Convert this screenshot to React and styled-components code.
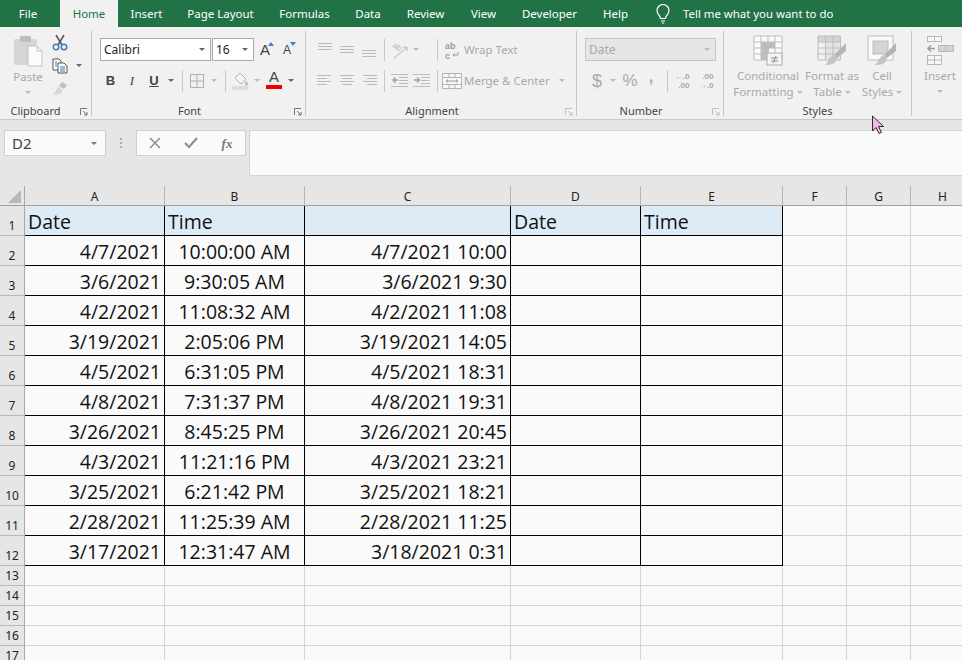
import React from "react";
import styled, { createGlobalStyle } from "styled-components";

const GlobalStyle = createGlobalStyle`
  html, body { margin: 0; padding: 0; background: #fafafa; overflow: hidden; }
  * { box-sizing: border-box; }
`;

const UI_FONT = `"Noto Sans", "Open Sans", sans-serif`;
const DIM = "#a9a9a9";
const DARK = "#444";

const tabs = [
  ["File", 56], ["Home", 58], ["Insert", 57], ["Page Layout", 91], ["Formulas", 77],
  ["Data", 50], ["Review", 65], ["View", 51], ["Developer", 81], ["Help", 51],
];

const columns = [
  ["A", 140], ["B", 140], ["C", 206], ["D", 130], ["E", 142], ["F", 64], ["G", 64], ["H", 64],
];

const rows = [
  ["4/7/2021", "10:00:00 AM", "4/7/2021 10:00"],
  ["3/6/2021", "9:30:05 AM", "3/6/2021 9:30"],
  ["4/2/2021", "11:08:32 AM", "4/2/2021 11:08"],
  ["3/19/2021", "2:05:06 PM", "3/19/2021 14:05"],
  ["4/5/2021", "6:31:05 PM", "4/5/2021 18:31"],
  ["4/8/2021", "7:31:37 PM", "4/8/2021 19:31"],
  ["3/26/2021", "8:45:25 PM", "3/26/2021 20:45"],
  ["4/3/2021", "11:21:16 PM", "4/3/2021 23:21"],
  ["3/25/2021", "6:21:42 PM", "3/25/2021 18:21"],
  ["2/28/2021", "11:25:39 AM", "2/28/2021 11:25"],
  ["3/17/2021", "12:31:47 AM", "3/18/2021 0:31"],
];

const Page = styled.div`
  position: relative;
  width: 962px;
  height: 660px;
  overflow: hidden;
  font-family: ${UI_FONT};
  background: #fafafa;
`;

const TabBar = styled.div`
  display: flex;
  height: 27px;
  background: #217346;
  color: #fff;
  font-size: 11.5px;
`;

const Tab = styled.div`
  width: ${(p) => p.$w}px;
  margin-left: ${(p) => (p.$active ? 4 : 0)}px;
  display: flex;
  align-items: center;
  justify-content: center;
  background: ${(p) => (p.$active ? "#f1f1f1" : "transparent")};
  color: ${(p) => (p.$active ? "#217346" : "#fff")};
`;

const TellMe = styled.div`
  display: flex;
  align-items: center;
  gap: 12px;
  margin-left: 14px;
  font-size: 11.4px;
`;

const Ribbon = styled.div`
  display: flex;
  height: 93px;
  padding-top: 4px;
  background: #f1f1f1;
  border-bottom: 1px solid #c9c9c9;
  overflow: hidden;
`;

const Group = styled.div`
  position: relative;
  flex: none;
  width: ${(p) => p.$w}px;
  height: 85px;
  display: flex;
  flex-direction: column;
  border-right: 1px solid #c6c6c6;
`;

const GroupBody = styled.div`
  flex: 1;
  display: flex;
  padding-left: ${(p) => p.$pad ?? 8}px;
  min-height: 0;
`;

const GroupLabel = styled.div`
  height: 14px;
  line-height: 18px;
  padding-right: ${(p) => p.$inset || 0}px;
  text-align: center;
  font-size: 11px;
  color: #444;
`;

const Launcher = styled.svg`
  position: absolute;
  right: 3px;
  bottom: 0;
`;

const Stack = styled.div`
  display: flex;
  flex-direction: column;
  gap: 8px;
  padding-top: 7px;
`;

const Line = styled.div`
  display: flex;
  align-items: center;
  height: 23px;
`;

const Slot = styled.span`
  flex: none;
  width: ${(p) => p.$w}px;
  height: 23px;
  display: flex;
  align-items: center;
  justify-content: center;
  position: relative;
`;

const Divider = styled.span`
  flex: none;
  width: ${(p) => p.$w || 10}px;
  display: flex;
  justify-content: center;
  &::before {
    content: "";
    width: 1px;
    height: 22px;
    background: #c6c6c6;
  }
`;

const Caret = styled.span`
  flex: none;
  width: 0;
  height: 0;
  border-left: 3px solid transparent;
  border-right: 3px solid transparent;
  border-top: 3px solid ${(p) => p.$color || "#666"};
`;

const ComboBox = styled.div`
  flex: none;
  width: ${(p) => p.$w}px;
  height: 23px;
  margin-right: ${(p) => p.$gap || 0}px;
  padding: 0 5px 0 3px;
  display: flex;
  align-items: center;
  justify-content: space-between;
  background: ${(p) => (p.$disabled ? "#e6e6e6" : "#fff")};
  border: 1px solid ${(p) => (p.$disabled ? "#c6c6c6" : "#ababab")};
  color: ${(p) => (p.$disabled ? DIM : "#222")};
  font-size: 12px;
`;

const Glyph = styled.span`
  font-family: ${(p) => p.$serif ? `"Liberation Serif", serif` : `"Liberation Sans", sans-serif`};
  font-size: ${(p) => p.$size || 13}px;
  font-weight: ${(p) => (p.$bold ? 700 : 400)};
  font-style: ${(p) => (p.$italic ? "italic" : "normal")};
  text-decoration: ${(p) => (p.$under ? "underline" : "none")};
  color: ${(p) => p.$color || DARK};
  line-height: 1;
  margin-bottom: ${(p) => p.$lift || 0}px;
`;

const ColorBar = styled.span`
  position: absolute;
  left: 4px;
  right: 4px;
  bottom: 3px;
  height: 4px;
  background: #f00000;
`;

const DimText = styled.span`
  flex: none;
  margin-left: ${(p) => p.$gap || 2}px;
  margin-right: 9px;
  font-size: 11.5px;
  color: ${DIM};
  white-space: nowrap;
`;

const Tiny = styled.span`
  display: flex;
  flex-direction: column;
  align-items: flex-end;
  font-family: "Liberation Sans", sans-serif;
  font-size: 8px;
  line-height: 9px;
  color: ${DIM};
  font-weight: 700;
`;

const BigButton = styled.div`
  flex: none;
  width: ${(p) => p.$w}px;
  height: 71px;
  padding-top: 4px;
  display: flex;
  flex-direction: column;
  align-items: center;
  font-size: 11.5px;
  line-height: 16px;
  color: ${DIM};
  white-space: nowrap;
  svg { flex: none; margin-bottom: 2px; }
`;

const ButtonLine = styled.span`
  display: flex;
  align-items: center;
  gap: 3px;
`;

const DropCaret = styled(Caret)`
  margin-top: 6px;
`;

const SmallCol = styled.div`
  flex: none;
  display: flex;
  flex-direction: column;
  width: 40px;
`;

const FormulaBar = styled.div`
  height: 66px;
  padding: 10px 0 0 4px;
  display: flex;
  align-items: flex-start;
  background: #e6e6e6;
`;

const NameBox = styled.div`
  width: 102px;
  height: 26px;
  padding: 0 8px 0 7px;
  display: flex;
  align-items: center;
  justify-content: space-between;
  background: #fafafa;
  border: 1px solid #d0d0d0;
  font-size: 15px;
  color: #444;
`;

const Grip = styled.div`
  width: 30px;
  height: 26px;
  display: flex;
  align-items: center;
  justify-content: center;
  &::before {
    content: "";
    width: 2px;
    height: 10px;
    background: repeating-linear-gradient(#b0b0b0 0 2px, transparent 2px 4px);
  }
`;

const FxBox = styled.div`
  width: 110px;
  height: 26px;
  display: flex;
  align-items: center;
  background: #fafafa;
  border: 1px solid #d0d0d0;
  margin-right: 3px;
`;

const FormulaInput = styled.div`
  flex: 1;
  height: 46px;
  background: #fafafa;
  border: 1px solid #d4d4d4;
  border-right: none;
`;

const Sheet = styled.div`
  display: grid;
  grid-template-columns: 25px ${columns.map((c) => c[1] + "px").join(" ")};
  grid-template-rows: 20px 30px repeat(11, 30px) repeat(5, 20px);
  font-family: "Open Sans", "Noto Sans", sans-serif;
  font-size: 19.5px;
  color: #111;
`;

const Corner = styled.div`
  display: flex;
  align-items: flex-end;
  justify-content: flex-end;
  padding: 0 3px 2px 0;
  background: #e6e6e6;
  border-right: 1px solid #a8a8a8;
  border-bottom: 1px solid #a0a0a0;
`;

const ColHead = styled.div`
  display: flex;
  align-items: center;
  justify-content: center;
  padding-top: 2px;
  background: #e6e6e6;
  border-right: 1px solid #b4b4b4;
  border-bottom: 1px solid #a0a0a0;
  font-family: ${UI_FONT};
  font-size: 12px;
  color: #222;
`;

const RowHead = styled.div`
  display: flex;
  align-items: flex-end;
  justify-content: center;
  padding-bottom: 1px;
  background: #e6e6e6;
  border-right: 1px solid #a8a8a8;
  border-bottom: 1px solid #b8b8b8;
  font-family: ${UI_FONT};
  font-size: 12px;
  line-height: 16px;
  color: #222;
`;

const Cell = styled.div`
  display: flex;
  align-items: flex-end;
  justify-content: ${(p) => p.$align || "flex-start"};
  padding: 0 3px 1px 3px;
  line-height: 25px;
  white-space: nowrap;
  overflow: hidden;
  background: ${(p) => (p.$head ? "#ddebf7" : "transparent")};
  border-right: 1px solid ${(p) => (p.$edged ? "#000" : "#d4d4d4")};
  border-bottom: 1px solid ${(p) => (p.$edged ? "#000" : "#d4d4d4")};
`;

const Pointer = styled.svg`
  position: absolute;
  left: 871px;
  top: 115px;
`;

function Bulb() {
  return (
    <svg width="16" height="20" viewBox="0 0 16 20" fill="none" stroke="#fff" strokeWidth="1.2">
      <path d="M5.5 14.5c0-3-3.5-4-3.5-8a6 6 0 0 1 12 0c0 4-3.5 5-3.5 8z" />
      <path d="M6 17h4M6.8 19h2.4" />
    </svg>
  );
}

function PasteIcon() {
  return (
    <svg width="30" height="32" viewBox="0 0 30 32">
      <rect x="1" y="4" width="23" height="26" rx="2" fill="#d6d6d6" />
      <rect x="7" y="1" width="11" height="6" rx="1" fill="#bdbdbd" />
      <path d="M15 11h9l5 5v15H15z" fill="#fbfbfb" stroke="#c2c2c2" />
      <path d="M24 11v5h5" fill="none" stroke="#c2c2c2" />
    </svg>
  );
}

function Scissors() {
  return (
    <svg width="16" height="17" viewBox="0 0 16 17" fill="none">
      <path d="M4 1l6 10M12 1L6 11" stroke="#555" strokeWidth="1.5" />
      <circle cx="4" cy="13" r="2.8" stroke="#3f77b8" strokeWidth="1.4" />
      <circle cx="12" cy="13" r="2.8" stroke="#3f77b8" strokeWidth="1.4" />
    </svg>
  );
}

function CopyIcon() {
  return (
    <svg width="16" height="16" viewBox="0 0 16 16" fill="#fff" stroke="#555">
      <path d="M1 1h6l2 2v9H1z" />
      <path d="M6 5h6l3 3v7H6z" />
      <path d="M8 9h5M8 11h5M8 13h5M3 4h2M3 6h2M3 8h2" fill="none" stroke="#3f77b8" />
    </svg>
  );
}

function BrushIcon() {
  return (
    <svg width="16" height="15" viewBox="0 0 16 15">
      <path d="M10 1l5 3-3 4-5-3z" fill="#c0c0c0" />
      <path d="M6 6l5 3c-1 3-5 5-10 5 2-2 3-5 5-8z" fill="#d8d8d8" />
    </svg>
  );
}

const TipSvg = styled.svg`
  position: absolute;
  top: 4px;
  right: 2px;
`;

function GrowTip({ down }) {
  return (
    <TipSvg width="6" height="4" viewBox="0 0 6 4">
      <path d={down ? "M0 0h6L3 4z" : "M0 4h6L3 0z"} fill="#4a7db5" />
    </TipSvg>
  );
}

function BordersIcon() {
  return (
    <svg width="14" height="14" viewBox="0 0 14 14" fill="none" stroke="#b0b0b0">
      <rect x="0.5" y="0.5" width="13" height="13" />
      <path d="M7 0v14M0 7h14" />
    </svg>
  );
}

function FillIcon() {
  return (
    <svg width="18" height="18" viewBox="0 0 18 18">
      <path d="M8 1l6 6-5 5-6-6z" fill="#f5f5f5" stroke="#b0b0b0" />
      <path d="M14 8c1 2 2 3 2 4a1.5 1.5 0 0 1-3 0c0-1 .5-2 1-4z" fill="#bcbcbc" />
      <rect x="0" y="14" width="16" height="4" fill="#dcdcdc" />
    </svg>
  );
}

function AlignLines({ widths, offset = 0, gap = 3, top = 0 }) {
  return (
    <svg width="16" height="16" viewBox="0 0 16 16" stroke="#bcbcbc" strokeWidth="1">
      {widths.map((w, i) => {
        const x = offset === 1 ? (16 - w) / 2 : offset === 2 ? 16 - w : 0;
        return <path key={i} d={`M${x} ${top + i * gap + 0.5}h${w}`} />;
      })}
    </svg>
  );
}

function OrientIcon() {
  return (
    <svg width="18" height="18" viewBox="0 0 18 18">
      <text x="1" y="8" fontSize="8" fill="#b4b4b4" fontFamily="Liberation Sans" transform="rotate(35 5 7)">ab</text>
      <path d="M3 17L15 7M12 6h4v4" fill="none" stroke="#b4b4b4" />
    </svg>
  );
}

function WrapIcon() {
  return (
    <svg width="18" height="18" viewBox="0 0 18 18">
      <text x="2" y="8" fontSize="9" fontWeight="700" fill="#9c9c9c" fontFamily="Liberation Sans">ab</text>
      <text x="2" y="17.5" fontSize="9" fontWeight="700" fill="#9c9c9c" fontFamily="Liberation Sans">c</text>
      <path d="M15 11v3h-5M11.5 12.5L10 14l1.5 1.5" fill="none" stroke="#9c9c9c" />
    </svg>
  );
}

function IndentIcon({ flip }) {
  return (
    <svg width="17" height="14" viewBox="0 0 17 14" stroke="#bcbcbc" fill="none">
      <path d="M0 .5h17M8 3.5h9M8 6.5h9M8 9.5h9M0 12.5h17" />
      <path d={flip ? "M1 6h5M4 3.5L6.5 6 4 8.5" : "M7 6H2M4.5 3.5L2 6l2.5 2.5"} stroke="#a0a0a0" strokeWidth="1.4" />
    </svg>
  );
}

function MergeIcon() {
  return (
    <svg width="20" height="16" viewBox="0 0 20 16" fill="#f7f7f7" stroke="#b4b4b4">
      <rect x="0.5" y="0.5" width="19" height="15" />
      <path d="M0 4.5h20M0 11.5h20M7 0v4M13 0v4M7 12v4M13 12v4" fill="none" />
      <path d="M4 8h12M4 8l2-1.5M4 8l2 1.5M16 8l-2-1.5M16 8l-2 1.5" fill="none" stroke="#9c9c9c" />
    </svg>
  );
}

function GridBase({ x = 1, y = 1, cols = 4, rowsN = 5, cw = 7, ch = 6 }) {
  const lines = [];
  for (let i = 0; i <= cols; i++) lines.push(`M${x + i * cw} ${y}v${rowsN * ch}`);
  for (let i = 0; i <= rowsN; i++) lines.push(`M${x} ${y + i * ch}h${cols * cw}`);
  return <path d={lines.join("")} stroke="#bdbdbd" fill="none" />;
}

function CondIcon() {
  return (
    <svg width="30" height="31" viewBox="0 0 30 31">
      <rect x="1" y="1" width="28" height="24" fill="#fafafa" />
      <rect x="8" y="7" width="8" height="18" fill="#bdbdbd" />
      <rect x="8" y="7" width="14" height="6" fill="#bdbdbd" />
      <GridBase cols={4} rowsN={4} cw={7} ch={6} />
      <rect x="14" y="18" width="15" height="12" fill="#f4f4f4" stroke="#b0b0b0" />
      <path d="M18 23h7M18 26h7M20 28l3-7" stroke="#8e8e8e" fill="none" />
    </svg>
  );
}

function TableIcon() {
  return (
    <svg width="30" height="31" viewBox="0 0 30 31">
      <rect x="1" y="1" width="22" height="6" fill="#d4d4d4" />
      <rect x="8" y="7" width="15" height="18" fill="#e3e3e3" />
      <GridBase cols={3} rowsN={4} cw={7.5} ch={6} />
      <path d="M29 8v8l-9 7-3-3z" fill="#b4b4b4" />
      <path d="M16 20c3 0 5 3 3 6-1 3-6 4-11 4 3-2 4-8 8-10z" fill="#c4c4c4" />
    </svg>
  );
}

function CellStyleIcon() {
  return (
    <svg width="30" height="31" viewBox="0 0 30 31">
      <rect x="1" y="1" width="25" height="24" fill="#fafafa" stroke="#bdbdbd" />
      <rect x="6" y="6" width="15" height="13" fill="#d4d4d4" stroke="#bdbdbd" />
      <path d="M29 8v8l-9 7-3-3z" fill="#b4b4b4" />
      <path d="M16 20c3 0 5 3 3 6-1 3-6 4-11 4 3-2 4-8 8-10z" fill="#c4c4c4" />
    </svg>
  );
}

function InsertIcon() {
  return (
    <svg width="28" height="31" viewBox="0 0 28 31" fill="#f7f7f7" stroke="#b8b8b8">
      <rect x="1.5" y="1.5" width="14" height="5" />
      <path d="M8.5 1.5v5" />
      <rect x="12.5" y="10.5" width="15" height="6" fill="#d4d4d4" />
      <path d="M20 10.5v6" />
      <path d="M9 13.5H2M5 10.5l-3 3 3 3" fill="none" stroke="#9a9a9a" strokeWidth="1.6" />
      <rect x="1.5" y="20.5" width="14" height="9" />
      <path d="M8.5 20.5v9M1.5 25h14" />
    </svg>
  );
}

function LauncherIcon({ dim }) {
  return (
    <Launcher width="8" height="8" viewBox="0 0 8 8" fill="none" stroke={dim ? "#c0c0c0" : "#777"}>
      <path d="M0.5 7V0.5H7M3 3l4 4M7 4v3H4" />
    </Launcher>
  );
}

function Ribbonbar() {
  return (
    <Ribbon>
      <Group $w={92}>
        <GroupBody $pad={12}>
          <BigButton $w={32}>
            <PasteIcon />
            <span>Paste</span>
            <DropCaret $color="#bbb" />
          </BigButton>
          <SmallCol>
            <Slot $w={32}><Scissors /></Slot>
            <Line>
              <Slot $w={32}><CopyIcon /></Slot>
              <Caret />
            </Line>
            <Slot $w={32}><BrushIcon /></Slot>
          </SmallCol>
        </GroupBody>
        <GroupLabel $inset={20}>Clipboard</GroupLabel>
        <LauncherIcon />
      </Group>

      <Group $w={214}>
        <GroupBody>
          <Stack>
            <Line>
              <ComboBox $w={111} $gap={1}>Calibri<Caret /></ComboBox>
              <ComboBox $w={42}>16<Caret /></ComboBox>
              <Slot $w={22}><Glyph $size={15}>A</Glyph><GrowTip /></Slot>
              <Slot $w={22}><Glyph $size={12}>A</Glyph><GrowTip down /></Slot>
            </Line>
            <Line>
              <Slot $w={21}><Glyph $bold>B</Glyph></Slot>
              <Slot $w={22}><Glyph $italic $serif>I</Glyph></Slot>
              <Slot $w={22}><Glyph $bold $under>U</Glyph></Slot>
              <Slot $w={12}><Caret /></Slot>
              <Divider />
              <Slot $w={20}><BordersIcon /></Slot>
              <Slot $w={13}><Caret $color="#bbb" /></Slot>
              <Divider />
              <Slot $w={22}><FillIcon /></Slot>
              <Slot $w={10}><Caret $color="#bbb" /></Slot>
              <Slot $w={24}><Glyph $size={15} $lift={8}>A</Glyph><ColorBar /></Slot>
              <Slot $w={10}><Caret /></Slot>
            </Line>
          </Stack>
        </GroupBody>
        <GroupLabel $inset={18}>Font</GroupLabel>
        <LauncherIcon />
      </Group>

      <Group $w={271}>
        <GroupBody>
          <Stack>
            <Line>
              <Slot $w={22}><AlignLines widths={[14, 14, 14]} offset={1} top={1} /></Slot>
              <Slot $w={22}><AlignLines widths={[14, 14, 14]} offset={1} top={4} /></Slot>
              <Slot $w={22}><AlignLines widths={[14, 14, 14]} offset={1} top={8} /></Slot>
              <Divider $w={8} />
              <Slot $w={24}><OrientIcon /></Slot>
              <Slot $w={8}><Caret $color="#bbb" /></Slot>
              <Slot $w={12} />
              <Divider />
              <Slot $w={20}><WrapIcon /></Slot>
              <DimText>Wrap Text</DimText>
            </Line>
            <Line>
              <Slot $w={22}><AlignLines widths={[14, 10, 14, 10]} top={2} /></Slot>
              <Slot $w={22}><AlignLines widths={[14, 10, 14, 10]} offset={1} top={2} /></Slot>
              <Slot $w={22}><AlignLines widths={[14, 10, 14, 10]} offset={2} top={2} /></Slot>
              <Divider $w={8} />
              <Slot $w={22}><IndentIcon /></Slot>
              <Slot $w={23}><IndentIcon flip /></Slot>
              <Divider $w={8} />
              <Slot $w={22}><MergeIcon /></Slot>
              <DimText $gap={1}>Merge &amp; Center</DimText>
              <Caret $color="#bbb" />
            </Line>
          </Stack>
        </GroupBody>
        <GroupLabel $inset={18}>Alignment</GroupLabel>
        <LauncherIcon dim />
      </Group>

      <Group $w={147}>
        <GroupBody>
          <Stack>
            <Line>
              <ComboBox $w={131} $disabled>Date<Caret $color="#bbb" /></ComboBox>
            </Line>
            <Line>
              <Slot $w={24}><Glyph $size={18} $color={DIM}>$</Glyph></Slot>
              <Slot $w={8}><Caret $color="#bbb" /></Slot>
              <Slot $w={3} />
              <Slot $w={20}><Glyph $size={17} $color={DIM}>%</Glyph></Slot>
              <Slot $w={22}><Glyph $size={16} $bold $lift={8} $color={DIM}>,</Glyph></Slot>
              <Divider />
              <Slot $w={20}><Tiny><span>←.0</span><span>.00</span></Tiny></Slot>
              <Slot $w={4} />
              <Slot $w={20}><Tiny><span>.00</span><span>→.0</span></Tiny></Slot>
            </Line>
          </Stack>
        </GroupBody>
        <GroupLabel $inset={18}>Number</GroupLabel>
        <LauncherIcon dim />
      </Group>

      <Group $w={188}>
        <GroupBody $pad={6}>
          <BigButton $w={76}>
            <CondIcon />
            <span>Conditional</span>
            <ButtonLine>Formatting <Caret $color="#bbb" /></ButtonLine>
          </BigButton>
          <BigButton $w={52}>
            <TableIcon />
            <span>Format as</span>
            <ButtonLine>Table <Caret $color="#bbb" /></ButtonLine>
          </BigButton>
          <BigButton $w={48}>
            <CellStyleIcon />
            <span>Cell</span>
            <ButtonLine>Styles <Caret $color="#bbb" /></ButtonLine>
          </BigButton>
        </GroupBody>
        <GroupLabel>Styles</GroupLabel>
      </Group>

      <Group $w={60}>
        <GroupBody $pad={0}>
          <BigButton $w={56}>
            <InsertIcon />
            <span>Insert</span>
            <DropCaret $color="#bbb" />
          </BigButton>
        </GroupBody>
      </Group>
    </Ribbon>
  );
}

function SheetGrid() {
  const headCols = { 0: "Date", 1: "Time", 3: "Date", 4: "Time" };
  const aligns = ["flex-end", "center", "flex-end"];
  return (
    <Sheet>
      <Corner>
        <svg width="13" height="13" viewBox="0 0 13 13"><path d="M13 0v13H0z" fill="#b8b8b8" /></svg>
      </Corner>
      {columns.map(([name]) => <ColHead key={name}>{name}</ColHead>)}

      <RowHead>1</RowHead>
      {columns.map(([name], i) => (
        <Cell key={name} $head={i < 5} $edged={i < 5}>{headCols[i]}</Cell>
      ))}

      {rows.map((row, r) => (
        <React.Fragment key={r}>
          <RowHead>{r + 2}</RowHead>
          {columns.map(([name], i) => (
            <Cell key={name} $edged={i < 5} $align={aligns[i]}>{row[i]}</Cell>
          ))}
        </React.Fragment>
      ))}

      {[13, 14, 15, 16, 17].map((n) => (
        <React.Fragment key={n}>
          <RowHead>{n}</RowHead>
          {columns.map(([name]) => <Cell key={name} />)}
        </React.Fragment>
      ))}
    </Sheet>
  );
}

export default function App() {
  return (
    <Page>
      <GlobalStyle />
      <TabBar>
        {tabs.map(([label, w]) => (
          <Tab key={label} $w={w} $active={label === "Home"}>{label}</Tab>
        ))}
        <TellMe><Bulb />Tell me what you want to do</TellMe>
      </TabBar>
      <Ribbonbar />
      <FormulaBar>
        <NameBox>D2<Caret $color="#777" /></NameBox>
        <Grip />
        <FxBox>
          <Slot $w={36}>
            <svg width="12" height="12" viewBox="0 0 12 12" stroke="#8c8c8c" strokeWidth="1.5"><path d="M1 1l10 10M11 1L1 11" /></svg>
          </Slot>
          <Slot $w={36}>
            <svg width="14" height="12" viewBox="0 0 14 12" fill="none" stroke="#8c8c8c" strokeWidth="2"><path d="M1 6l4 4 8-9" /></svg>
          </Slot>
          <Slot $w={36}><Glyph $serif $italic $bold $size={13} $color="#777">fx</Glyph></Slot>
        </FxBox>
        <FormulaInput />
      </FormulaBar>
      <SheetGrid />
      <Pointer width="15" height="20" viewBox="0 0 15 20">
        <path d="M1.5 1v15l3.5-3.5 3 6 2.5-1.2-3-5.8h5z" fill="#f6b8ea" stroke="#2c2c2c" strokeWidth="1" />
      </Pointer>
    </Page>
  );
}
